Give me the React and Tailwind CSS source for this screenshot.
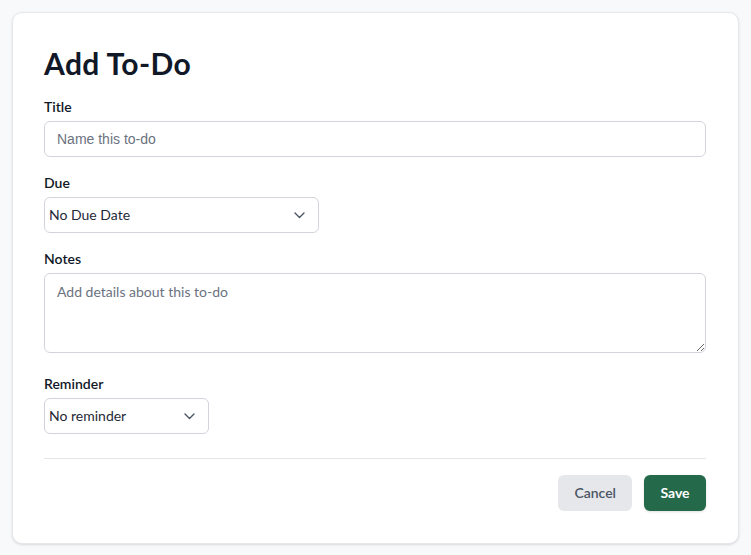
import React from "react";

function Chevron() {
  return (
    <svg width="11" height="7" viewBox="0 0 11 7" fill="none" className="shrink-0">
      <path d="M1 1l4.5 4.5L10 1" stroke="#4b5563" strokeWidth="1.4" strokeLinecap="round" strokeLinejoin="round" />
    </svg>
  );
}

function Label({ children }) {
  return (
    <div className="text-sm leading-5 font-semibold text-[#111827] mb-1">
      {children}
    </div>
  );
}

function FakeSelect({ value, width }) {
  return (
    <div
      className={`${width} h-9 flex items-center justify-between pl-1 pr-[13px] border border-[#d1d5db] rounded-md bg-white text-sm text-[#1f2937]`}
    >
      <span>{value}</span>
      <Chevron />
    </div>
  );
}

export default function App() {
  return (
    <div className="min-h-[555px] bg-[#f8f9fb] p-3" style={{ fontFamily: "Lato, sans-serif" }}>
      <div className="bg-white border border-[#e5e7eb] rounded-[10px] shadow-sm pl-[31px] pr-8 pt-8 pb-8">
        <h1 className="text-3xl leading-9 font-bold tracking-[0.4px] text-[#111827] mb-4">Add To-Do</h1>

        <div className="mb-4">
          <Label>Title</Label>
          <input
            type="text"
            placeholder="Name this to-do"
            className="block w-full h-9 px-3 border border-[#d1d5db] rounded-md text-sm text-[#111827] placeholder:text-[#6b7280] outline-none"
            style={{ fontFamily: "'Liberation Sans', Arial, sans-serif" }}
          />
        </div>

        <div className="mb-4">
          <Label>Due</Label>
          <FakeSelect value="No Due Date" width="w-[275px]" />
        </div>

        <div className="mb-[21px]">
          <Label>Notes</Label>
          <textarea
            placeholder="Add details about this to-do"
            className="block w-full h-20 px-3 py-2 border border-[#d1d5db] rounded-md text-sm leading-5 text-[#111827] placeholder:text-[#6b7280] outline-none resize-y"
          />
        </div>

        <div>
          <Label>Reminder</Label>
          <FakeSelect value="No reminder" width="w-[165px]" />
        </div>

        <div className="mt-6 border-t border-[#e5e7eb] pt-4 flex justify-end gap-3">
          <button className="h-9 px-4 rounded-md bg-[#e5e7eb] text-sm font-semibold text-[#4b5563]">Cancel</button>
          <button className="h-9 w-[62px] rounded-md bg-[#24694a] text-sm font-bold text-white shadow-sm">Save</button>
        </div>
      </div>
    </div>
  );
}
